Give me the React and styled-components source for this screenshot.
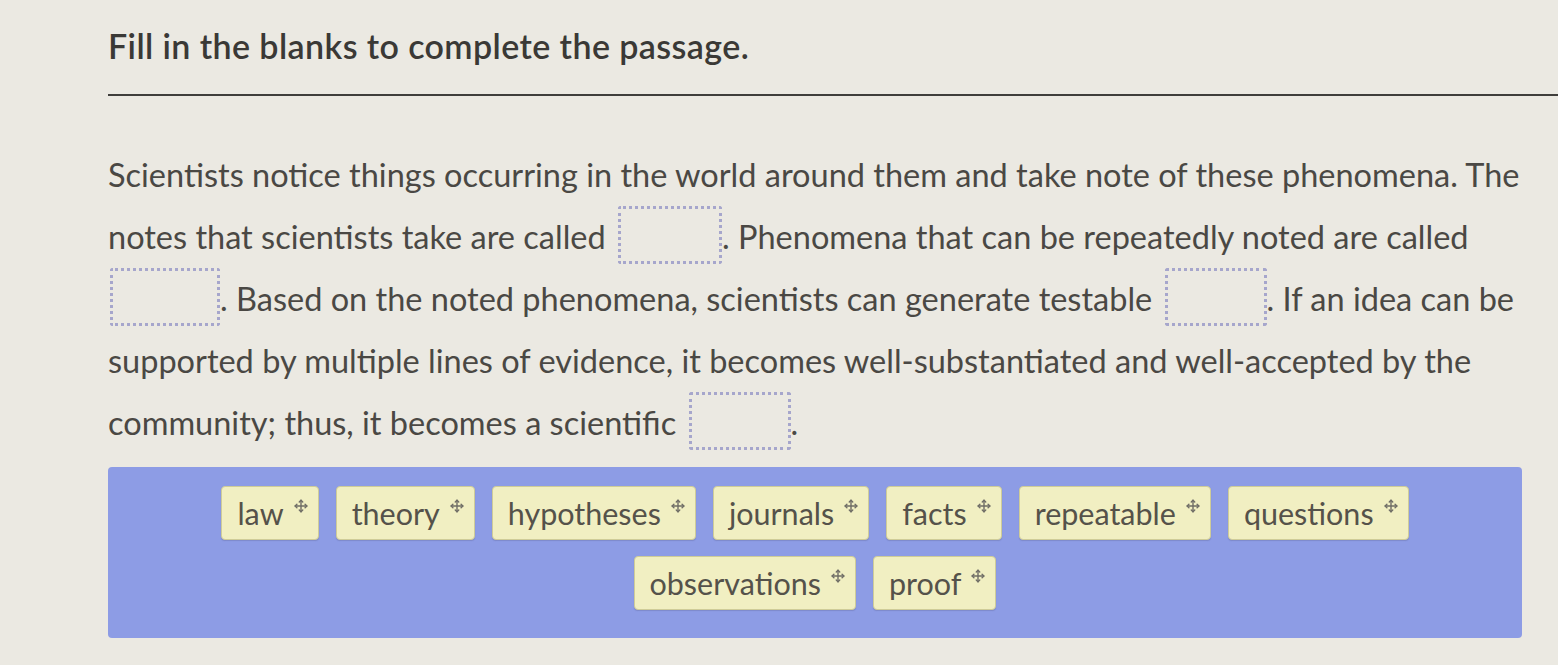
import React from "react";
import styled, { createGlobalStyle } from "styled-components";
import { Move } from "lucide-react";

const GlobalStyle = createGlobalStyle`
  html, body {
    margin: 0;
    padding: 0;
    background: #ebe9e2;
  }
  body {
    font-family: "Lato", "Liberation Sans", sans-serif;
    color: #4a4844;
  }
`;

const Page = styled.div`
  width: 1558px;
  height: 665px;
  overflow: hidden;
  background: #ebe9e2;
  padding: 25px 0 0 108px;
  box-sizing: border-box;
`;

const Header = styled.div`
  border-bottom: 2px solid #3f3e3b;
  padding-bottom: 28px;
`;

const Title = styled.h1`
  margin: 0;
  font-size: 34px;
  font-weight: 600;
  color: #3a3936;
  letter-spacing: 0.4px;
`;

const Passage = styled.p`
  margin: 48px 0 0;
  width: 1440px;
  font-size: 32.5px;
  line-height: 62px;
  color: #4a4844;
  white-space: nowrap;
`;

const Blank = styled.span`
  display: inline-block;
  width: ${({ $w }) => $w || 104}px;
  height: 58px;
  box-sizing: border-box;
  border: 3px dotted #a6a6cc;
  border-radius: 3px;
  vertical-align: -15px;
  margin-left: ${({ $first }) => ($first ? 2 : 4)}px;
`;

const WordBank = styled.div`
  margin-top: 13px;
  width: 1414px;
  box-sizing: border-box;
  background: #8d9ce5;
  border-radius: 4px;
  padding: 19px 24px 28px;
  display: flex;
  flex-wrap: wrap;
  justify-content: center;
  gap: 16px 17px;
`;

const Chip = styled.div`
  display: flex;
  align-items: flex-start;
  gap: 10px;
  height: 54px;
  box-sizing: border-box;
  padding: 0 10px 0 15px;
  background: #f1efc2;
  border: 1px solid #cfcc98;
  border-radius: 4px;
  box-shadow: 0 1px 1px rgba(80, 80, 120, 0.25);
  color: #55524a;
  font-size: 30.5px;
  cursor: move;
`;

const ChipText = styled.span`
  line-height: 52px;
`;

const Handle = styled.span`
  display: flex;
  margin-top: 12px;
  color: #6f6d66;
`;

const words = [
  "law",
  "theory",
  "hypotheses",
  "journals",
  "facts",
  "repeatable",
  "questions",
  "observations",
  "proof",
];

const App = () => {
  return (
    <Page>
      <GlobalStyle />
      <Header>
        <Title>Fill in the blanks to complete the passage.</Title>
      </Header>
      <Passage>
        Scientists notice things occurring in the world around them and take note of these phenomena. The
        <br />
        notes that scientists take are called <Blank />. Phenomena that can be repeatedly noted are called
        <br />
        <Blank $w={110} $first />. Based on the noted phenomena, scientists can generate testable <Blank $w={102} />. If an idea can be
        <br />
        supported by multiple lines of evidence, it becomes well-substantiated and well-accepted by the
        <br />
        community; thus, it becomes a scientific <Blank $w={102} />.
      </Passage>
      <WordBank>
        {words.map((w) => (
          <Chip key={w}>
            <ChipText>{w}</ChipText>
            <Handle>
              <Move size={14} strokeWidth={2.4} />
            </Handle>
          </Chip>
        ))}
      </WordBank>
    </Page>
  );
};

export default App;
